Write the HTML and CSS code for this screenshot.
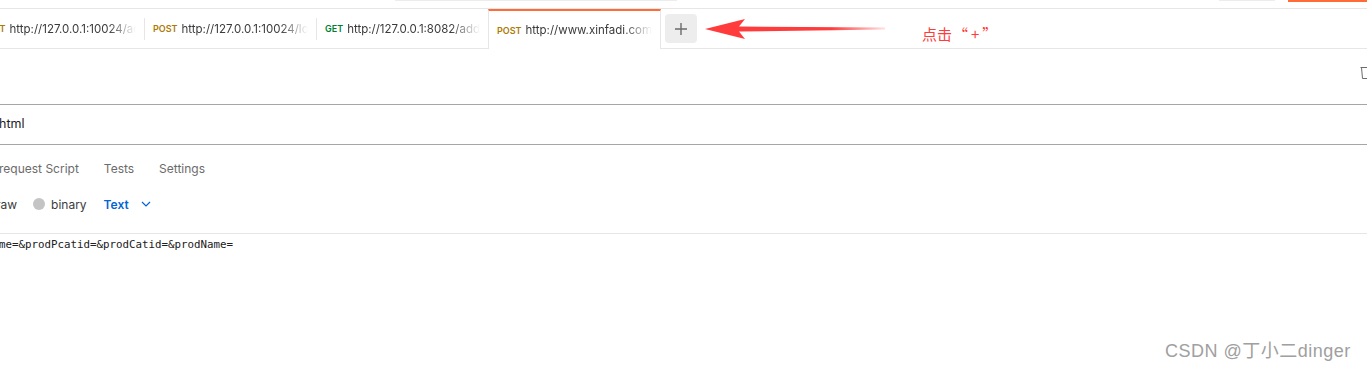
FILE: index.html
```html
<!DOCTYPE html>
<html lang="en">
<head>
    <meta charset="UTF-8">
    <title>Postman</title>
    <link rel="stylesheet" href="styles.css">
</head>
<body>
    <div class="topbar">
        <div class="top-search"></div>
        <div class="top-btn"></div>
        <div class="top-btn top-btn-primary"></div>
    </div>

    <div class="tabs">
        <div class="tab tab-first">
            <span class="method post">POST</span>
            <span class="url">http://127.0.0.1:10024/add</span>
        </div>
        <div class="tab">
            <span class="method post">POST</span>
            <span class="url">http://127.0.0.1:10024/login</span>
        </div>
        <div class="tab">
            <span class="method get">GET</span>
            <span class="url">http://127.0.0.1:8082/add</span>
        </div>
        <div class="tab tab-active">
            <span class="method post">POST</span>
            <span class="url">http://www.xinfadi.com.cn</span>
        </div>
        <div class="tab-add">
            <svg width="14" height="14" viewBox="0 0 14 14"><path d="M7 1v12M1 7h12" stroke="#6b6b6b" stroke-width="1.4"/></svg>
        </div>
        <svg class="note-arrow" width="180" height="22" viewBox="0 0 180 22">
            <defs>
                <linearGradient id="fade" x1="0" x2="1" y1="0" y2="0">
                    <stop offset="0" stop-color="#ff3b3b"/>
                    <stop offset="0.7" stop-color="#ff3b3b"/>
                    <stop offset="1" stop-color="#ff3b3b" stop-opacity="0.15"/>
                </linearGradient>
            </defs>
            <path d="M0 11 L40 1 L34 8.5 L180 9.5 L180 11.5 L34 13.5 L40 21 Z" fill="url(#fade)"/>
        </svg>
        <span class="note-text" lang="zh-CN">点击<span class="note-quote">“+”</span></span>
    </div>

    <div class="url-row">
        <svg class="row-icon" width="10" height="14" viewBox="0 0 10 14"><path d="M0.5 1.5h9M1.5 1.5l1 11h7" fill="none" stroke="#6b6b6b" stroke-width="1"/></svg>
    </div>

    <div class="doc-row">html</div>

    <div class="req-tabs">
        <span class="req-tab">request Script</span>
        <span class="req-tab">Tests</span>
        <span class="req-tab">Settings</span>
    </div>

    <div class="body-types">
        <span class="opt">raw</span>
        <span class="opt"><span class="radio"></span>binary</span>
        <span class="opt opt-lang">Text
            <svg width="10" height="6" viewBox="0 0 10 6"><path d="M1 1l4 4 4-4" fill="none" stroke="#0265d2" stroke-width="1.2"/></svg>
        </span>
    </div>

    <div class="code">me=&amp;prodPcatid=&amp;prodCatid=&amp;prodName=</div>

    <div class="watermark">CSDN @丁小二dinger</div>
</body>
</html>
```

FILE: styles.css
```css
body {
    margin: 0;
    font-family: Inter, "Noto Sans CJK SC", sans-serif;
    background-color: #fff;
    color: #212121;
    width: 1367px;
    height: 370px;
    overflow: hidden;
    position: relative;
}
.topbar {
    height: 8px;
    border-bottom: 1px solid #e6e6e6;
    display: flex;
    align-items: flex-start;
}
.top-search {
    margin-left: 395px;
    width: 285px;
    height: 1px;
    background-color: #ededed;
}
.top-btn {
    margin-left: 542px;
    width: 56px;
    height: 1px;
    background-color: #ededed;
}
.top-btn-primary {
    margin-left: 13px;
    width: 80px;
    height: 2px;
    background-color: #ff6c37;
}
.tabs {
    height: 39px;
    border-bottom: 1px solid #e6e6e6;
    display: flex;
    align-items: stretch;
}
.tab {
    width: 172px;
    flex-shrink: 0;
    padding: 0 8px 0 9px;
    box-sizing: border-box;
    display: flex;
    align-items: center;
    gap: 4px;
    white-space: nowrap;
    position: relative;
}
.tab + .tab::before {
    content: "";
    position: absolute;
    left: 0;
    top: 9px;
    height: 22px;
    width: 1px;
    background-color: #e6e6e6;
}
.tab-first {
    margin-left: -28px;
}
.tab-active {
    width: 173px;
    padding-left: 8px;
    border-left: 1px solid #e6e6e6;
    border-right: 1px solid #e6e6e6;
    border-top: 2px solid #ff6c37;
    margin-bottom: -1px;
    background-color: #fff;
}
.tab-active::before {
    display: none;
}
.method {
    font-size: 9px;
    font-weight: 600;
}
.post {
    color: #ad7a03;
}
.get {
    color: #007f31;
}
.url {
    flex: 1;
    min-width: 0;
    overflow: hidden;
    font-size: 11.5px;
    color: #3b3b3b;
    -webkit-mask-image: linear-gradient(to right, #000 78%, transparent 100%);
}
.tab-add {
    margin: 5px 0 5px 4px;
    width: 32px;
    background-color: #ededed;
    border-radius: 4px;
    display: flex;
    align-items: center;
    justify-content: center;
}
.note-arrow {
    align-self: center;
    margin-left: 8px;
    margin-top: 1px;
}
.note-text {
    align-self: center;
    margin-left: 37px;
    margin-top: 9px;
    font-family: "Noto Sans CJK SC", sans-serif;
    font-size: 15px;
    color: #ff3b3b;
}
.note-quote {
    margin-left: 1px;
    letter-spacing: 3px;
}
.url-row {
    height: 55px;
    border-bottom: 1px solid #a6a6a6;
    display: flex;
    justify-content: flex-end;
    align-items: flex-start;
}
.row-icon {
    margin-top: 17px;
    margin-right: -3px;
}
.doc-row {
    height: 40px;
    box-sizing: border-box;
    padding-bottom: 3px;
    border-bottom: 1px solid #a6a6a6;
    display: flex;
    align-items: center;
    font-size: 12.5px;
    margin-left: -1px;
}
.req-tabs {
    display: flex;
    gap: 25px;
    height: 46px;
    align-items: center;
    margin-left: -1px;
    font-size: 12px;
    color: #6b6b6b;
}
.body-types {
    display: flex;
    align-items: center;
    gap: 16px;
    height: 26px;
    margin-left: -4px;
    font-size: 12px;
    color: #3b3b3b;
}
.opt {
    display: flex;
    align-items: center;
    gap: 6px;
}
.radio {
    width: 12px;
    height: 12px;
    border-radius: 50%;
    background-color: #c4c4c4;
}
.opt-lang {
    margin-left: 1px;
    gap: 12px;
    color: #0265d2;
    font-weight: 600;
}
.code {
    margin-top: 16px;
    border-top: 1px solid #e6e6e6;
    padding-top: 4px;
    font-family: "DejaVu Sans Mono", monospace;
    font-size: 10.8px;
    text-indent: -1px;
    color: #212121;
}
.watermark {
    position: absolute;
    left: 1165px;
    top: 336px;
    font-family: "Liberation Sans", "Noto Sans CJK SC", sans-serif;
    font-size: 18px;
    letter-spacing: 0.5px;
    color: #a0a0a0;
}
```
